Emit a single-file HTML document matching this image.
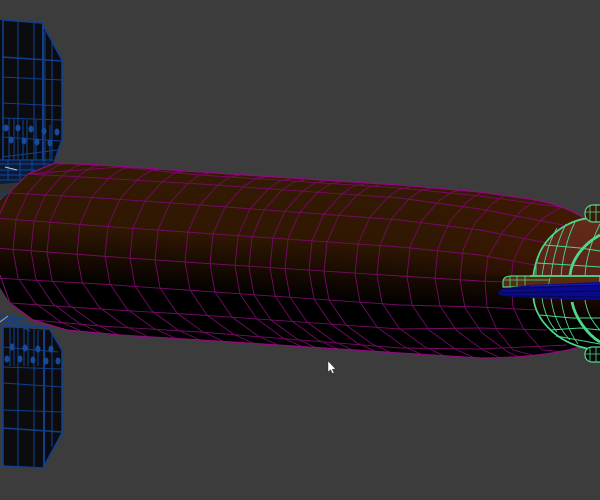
<!DOCTYPE html>
<html><head><meta charset="utf-8"><style>
html,body{margin:0;padding:0;background:#3c3c3c;width:600px;height:500px;overflow:hidden}
svg{display:block;filter:blur(.35px)}
</style></head><body>
<svg width="600" height="500" viewBox="0 0 600 500" xmlns="http://www.w3.org/2000/svg">
<defs>
<linearGradient id="b" gradientUnits="userSpaceOnUse" x1="300" y1="180" x2="293" y2="300">
<stop offset="0" stop-color="#331a03"/><stop offset=".5" stop-color="#2f1702"/><stop offset=".78" stop-color="#160a01"/><stop offset="1" stop-color="#000"/>
</linearGradient>
<linearGradient id="r" gradientUnits="userSpaceOnUse" x1="420" y1="0" x2="600" y2="0">
<stop offset="0" stop-color="#4a1500" stop-opacity="0"/><stop offset="1" stop-color="#5a1c04" stop-opacity=".5"/>
</linearGradient>
<linearGradient id="e" x1="0" y1="0" x2="0" y2="1">
<stop offset="0" stop-color="#642a18"/><stop offset=".42" stop-color="#55231a"/><stop offset=".62" stop-color="#1a0804"/><stop offset=".78" stop-color="#000"/>
</linearGradient>
<clipPath id="c"><path d="M55 163L100 165 200 172 400 185 480 192 530 199C555 203 575 211 590 222L600 290 580 347C555 354 520 358 480 358L400 353 200 340 120 335 67 330 33 320 10 303 -5 280 -5 205 10 192 28 174Z"/></clipPath>
<path id="ring" d="M55 -87L45 -85 33 -77 15 -57 3 -30 0 0 5 28 22 53 48 72 70 82"/>
</defs>
<rect width="600" height="500" fill="#3c3c3c"/>

<!-- top wing -->
<path d="M3 20L42 23 62 60 62 140 53 165 0 172 0 20Z" fill="#0c0c0e"/>
<g fill="none" stroke="#103f8e" stroke-width="1.100">
<path stroke-width="1.600" d="M3 20L42 23 62 60 62 140 53 165M3 20V165"/>
<path d="M18 21V165M34 22V165M45 31V165M52 43V165"/>
<path stroke-width="2" d="M43 23V165"/>
<path stroke-width="1.600" d="M2 57L62 61"/>
<path d="M2 77L62 80M2 103L62 106M2 118L62 120M2 137L62 141"/>
<path d="M9 118V160M14 118V160M23 120V160M27 120V160M36 120V163M50 125V160M2 157L58 150"/>
</g>
<g fill="#164a9c">
<ellipse cx="6" cy="128" rx="2.500" ry="3.500"/><ellipse cx="18" cy="128" rx="2.500" ry="3.500"/><ellipse cx="31" cy="129" rx="2.500" ry="3.500"/><ellipse cx="44" cy="131" rx="2.500" ry="3.500"/><ellipse cx="57" cy="132" rx="2.500" ry="3.500"/>
<ellipse cx="11" cy="140" rx="2.500" ry="3.500"/><ellipse cx="24" cy="141" rx="2.500" ry="3.500"/><ellipse cx="37" cy="142" rx="2.500" ry="3.500"/><ellipse cx="50" cy="143" rx="2.500" ry="3.500"/>
</g>
<path d="M0 160L53 161 56 164 30 178 12 195 0 196Z" fill="#0b1a35"/>
<path d="M0 184L22 182 10 195 0 198Z" fill="#333"/>
<g fill="none" stroke="#103f8e" stroke-width="1.200">
<path d="M0 160H53M0 164H50M0 170H35M0 175H26M0 180H24M0 194H10M8 160V180M20 160V180M32 160V172M44 160V166"/>
<path d="M0 210L8 198"/>
</g>
<path d="M5 167L17 170" stroke="#c8c8b8" stroke-width="1.100"/>

<!-- bottom wing -->
<path d="M3 327L50 330 62 350 62 433 43 468 3 466Z" fill="#0c0c0e"/>
<g fill="none" stroke="#103f8e" stroke-width="1.100">
<path stroke-width="1.600" d="M3 327V466L43 468 62 433 62 350 50 330"/>
<path d="M18 325V467M34 327V467M52 335V447"/>
<path stroke-width="2" d="M44 328V468"/>
<path d="M3 367L62 369M3 383L62 387M3 410L62 412"/>
<path stroke-width="1.600" d="M3 428L62 432"/>
<path d="M10 328V366M14 328V366M24 328V366M28 328V366M38 330V366"/>
<path d="M3 347L58 352"/>
</g>
<g fill="#164a9c">
<ellipse cx="12" cy="347" rx="2.500" ry="3.500"/><ellipse cx="25" cy="348" rx="2.500" ry="3.500"/><ellipse cx="38" cy="349" rx="2.500" ry="3.500"/><ellipse cx="51" cy="349" rx="2.500" ry="3.500"/>
<ellipse cx="7" cy="359" rx="2.500" ry="3.500"/><ellipse cx="20" cy="359" rx="2.500" ry="3.500"/><ellipse cx="33" cy="360" rx="2.500" ry="3.500"/><ellipse cx="46" cy="361" rx="2.500" ry="3.500"/><ellipse cx="58" cy="361" rx="2.500" ry="3.500"/>
</g>
<g fill="none" stroke="#103f8e" stroke-width="1.500">
<path d="M0 315L20 320 32 328M0 322L24 318M0 326L18 322M3 327H50M12 322L30 331M0 318L14 316"/>
</g>
<path d="M0 322L8 316" stroke="#9ab" stroke-width="1"/>

<!-- body -->
<path d="M55 163L100 165 200 172 400 185 480 192 530 199C555 203 575 211 590 222L600 290 580 347C555 354 520 358 480 358L400 353 200 340 120 335 67 330 33 320 10 303 -5 280 -5 205 10 192 28 174Z" fill="url(#b)"/>
<path d="M420 187L480 192 530 199C555 203 575 211 590 222L600 280 420 272Z" fill="url(#r)"/>

<g clip-path="url(#c)" fill="none" stroke="#760a66" stroke-width=".9">
<!-- longitudinal -->
<path d="M28 174L120 167 200 175 400 188 480 196 560 207"/>
<path d="M28 174L100 178 200 184 400 198 480 209 563 225"/>
<path d="M10 193L100 198 200 205 400 220 480 230 547 243"/>
<path d="M-5 218L100 226 200 233 400 247 480 255 535 265"/>
<path d="M-5 248L100 256 200 263 400 276 480 281 533 283"/>
<path d="M-5 278L100 284 200 291 400 305 480 307 537 310"/>
<path d="M10 303L100 309 200 315 400 329 480 328 547 330"/>
<path d="M33 320L100 326 200 332 400 348 480 349 567 345"/>
<!-- rings -->
<use href="#ring" transform="translate(13 250)"/>
<use href="#ring" transform="translate(31 251)"/>
<use href="#ring" transform="translate(47 252)"/>
<use href="#ring" transform="translate(77 254)"/>
<use href="#ring" transform="translate(105 256)"/>
<use href="#ring" transform="translate(130 258)"/>
<use href="#ring" transform="translate(155 260)"/>
<use href="#ring" transform="translate(185 262)"/>
<use href="#ring" transform="translate(210 264)"/>
<use href="#ring" transform="translate(235 266)"/>
<use href="#ring" transform="translate(249 267)"/>
<use href="#ring" transform="translate(270 268)"/>
<use href="#ring" transform="translate(285 269)"/>
<use href="#ring" transform="translate(309 271)"/>
<use href="#ring" transform="translate(324 272)"/>
<use href="#ring" transform="translate(355 274)"/>
<use href="#ring" transform="translate(377 275)"/>
<use href="#ring" transform="translate(407 277)"/>
<use href="#ring" transform="translate(435 278)"/>
<use href="#ring" transform="translate(460 280)"/>
<path d="M540 197L522 210 502 233 488 257 485 281 487 307 497 330 513 350 540 357"/>
<path d="M565 205L543 218 523 240 513 262 511 282 513 307 523 328 542 350 565 352"/>
</g>
<path d="M28 174L55 163 100 165 200 172 400 185 480 192 530 199C555 203 575 211 590 222" fill="none" stroke="#8f0c7c" stroke-width="1.300"/>
<path d="M10 303L33 320 67 330 120 335 200 340 400 353 480 358C520 358 555 354 580 347" fill="none" stroke="#8f0c7c" stroke-width="1.300"/>
<path d="M10 192L28 174M0 213L10 192M0 275L10 303" fill="none" stroke="#8f0c7c" stroke-width="1"/>

<!-- engine -->
<path d="M600 218C575 216 552 230 541 250C533 266 531 285 534 302C538 322 558 342 585 348L600 352Z" fill="url(#e)"/>
<g fill="none" stroke="#4fd68a" stroke-width=".9">
<path stroke-width="1.800" d="M600 218C575 216 552 230 541 250C533 266 531 285 534 302C538 322 558 342 585 348L600 352"/>
<path d="M536 276V262M557 228C550 240 545 255 542 276M566 224C558 240 553 258 551 276M575 222C568 236 563 255 561 276"/>
<path d="M542 298C544 312 549 323 557 332M551 298C553 315 560 330 570 340M561 298C563 315 569 332 578 344"/>
<path stroke-width="2.800" d="M600 235C585 243 572 258 570 275M572 302C575 318 588 335 600 342"/>
<path d="M600 224C592 240 586 258 585 276M585 300C587 312 592 322 600 330"/>
<path d="M545 245L580 248 600 251M537 263L570 265 600 267M540 315L572 318 600 318M550 330L580 328 600 330M556 336L600 344"/>
</g>
<!-- pods -->
<rect x="585" y="205" width="22" height="17" rx="8" fill="#3a1a08" stroke="#4fd68a" stroke-width="1.200"/>
<path d="M590 205V221M596 204V222M585 212H600" stroke="#4fd68a" stroke-width=".8" fill="none"/>
<rect x="585" y="347" width="22" height="15" rx="7" fill="#0a0a0a" stroke="#4fd68a" stroke-width="1.200"/>
<path d="M590 347V362M596 347V362M585 354H600" stroke="#4fd68a" stroke-width=".8" fill="none"/>
<path d="M600 276L512 276Q503 276 503 282L503 287 600 287Z" fill="#5a2a10" stroke="#4fd68a" stroke-width="1.200"/>
<path d="M510 276V287M517 276V287M525 276V287M503 280H550M550 278L548 287" stroke="#4fd68a" stroke-width=".8" fill="none"/>
<path d="M530 276H600" stroke="#4fd68a" stroke-width="1.800"/>
<path d="M600 282L530 285 505 288Q498 291 498 293 499 295 505 296L530 298 600 300Z" fill="#0a0a8c"/>
<path d="M500 293L600 291M505 289L600 285M505 296L600 297" stroke="#060650" stroke-width="1" fill="none"/>
<path d="M530 286L600 284" stroke="#1c1cc0" stroke-width="1" fill="none"/>

<!-- cursor -->
<path d="M328 361V372L330.500 369.700 332.500 373.500 334 372.800 332.300 369.200 335.500 369Z" fill="#fff" stroke="#222" stroke-width=".4"/>
</svg>
</body></html>
